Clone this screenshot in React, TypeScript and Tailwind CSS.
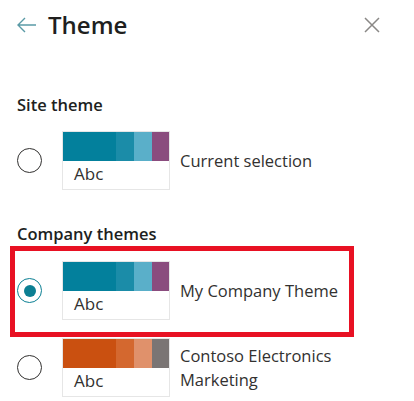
import React from "react";

type Theme = {
  name: string;
  colors: string[];
  selected?: boolean;
};

const siteTheme: Theme = {
  name: "Current selection",
  colors: ["bg-[#03809c]", "bg-[#1b8ca8]", "bg-[#5aafc9]", "bg-[#8a4c7e]"],
};

const companyThemes: Theme[] = [
  {
    name: "My Company Theme",
    colors: ["bg-[#03809c]", "bg-[#1b8ca8]", "bg-[#5aafc9]", "bg-[#8a4c7e]"],
    selected: true,
  },
  {
    name: "Contoso Electronics Marketing",
    colors: ["bg-[#ca5010]", "bg-[#d4682f]", "bg-[#e0916b]", "bg-[#7a7574]"],
  },
];

const Radio: React.FC<{ checked?: boolean }> = ({ checked }) => (
  <span
    className={`flex h-[25px] w-[25px] shrink-0 items-center justify-center rounded-full border ${
      checked ? "border-[#0b7f93]" : "border-[#323130]"
    }`}
  >
    {checked && <span className="h-[12px] w-[12px] rounded-full bg-[#0b7f93]" />}
  </span>
);

const Swatch: React.FC<{ colors: string[] }> = ({ colors }) => (
  <div className="w-[108px] shrink-0 border border-[#e6e6e6] bg-white">
    <div className="flex h-[29px]">
      <div className={`w-[53px] ${colors[0]}`} />
      <div className={`w-[18px] ${colors[1]}`} />
      <div className={`w-[18px] ${colors[2]}`} />
      <div className={`w-[17px] ${colors[3]}`} />
    </div>
    <div className="h-[28px] pl-[11px] text-[17px] leading-[26px] text-[#323130]">Abc</div>
  </div>
);

const ThemeRow: React.FC<{ theme: Theme }> = ({ theme }) => (
  <div className="flex items-center">
    <Radio checked={theme.selected} />
    <div className="ml-[20px]">
      <Swatch colors={theme.colors} />
    </div>
    <div className="ml-[10px] w-[165px] text-[16.5px] leading-[24px] text-[#323130]">
      {theme.name}
    </div>
  </div>
);

export default function App() {
  return (
    <div
      className="h-[401px] w-[414px] overflow-hidden bg-white"
      style={{ fontFamily: '"Open Sans", "Noto Sans", sans-serif' }}
    >
      {/* Header */}
      <div className="flex h-[50px] items-center pl-[17px] pr-[34px]">
        <svg width="20" height="16" viewBox="0 0 20 16" className="shrink-0">
          <path d="M8 1 1 8l7 7M1 8h18" fill="none" stroke="#5a9aa6" strokeWidth="1.4" />
        </svg>
        <h1 className="ml-[11px] text-[24px] font-semibold leading-[32px] text-[#201f1e]">Theme</h1>
        <svg width="16" height="16" viewBox="0 0 16 16" className="ml-auto shrink-0">
          <path d="M1 1l14 14M15 1 1 15" fill="none" stroke="#8a8886" strokeWidth="1.5" />
        </svg>
      </div>

      {/* Site theme */}
      <div className="mt-[43px] pl-[17px] text-[16.5px] font-semibold leading-[24px] text-[#201f1e]">
        Site theme
      </div>
      <div className="mt-[14px] px-[17px]">
        <ThemeRow theme={siteTheme} />
      </div>

      {/* Company themes */}
      <div className="mt-[32px] pl-[17px] text-[16.5px] font-semibold leading-[24px] text-[#201f1e]">
        Company themes
      </div>
      <div className="ml-[10px] w-[344px] border-[5px] border-[#e81123] pb-[12px] pl-[2px] pt-[10px]">
        <ThemeRow theme={companyThemes[0]} />
      </div>
      <div className="mt-[1px] px-[17px]">
        <ThemeRow theme={companyThemes[1]} />
      </div>
    </div>
  );
}
